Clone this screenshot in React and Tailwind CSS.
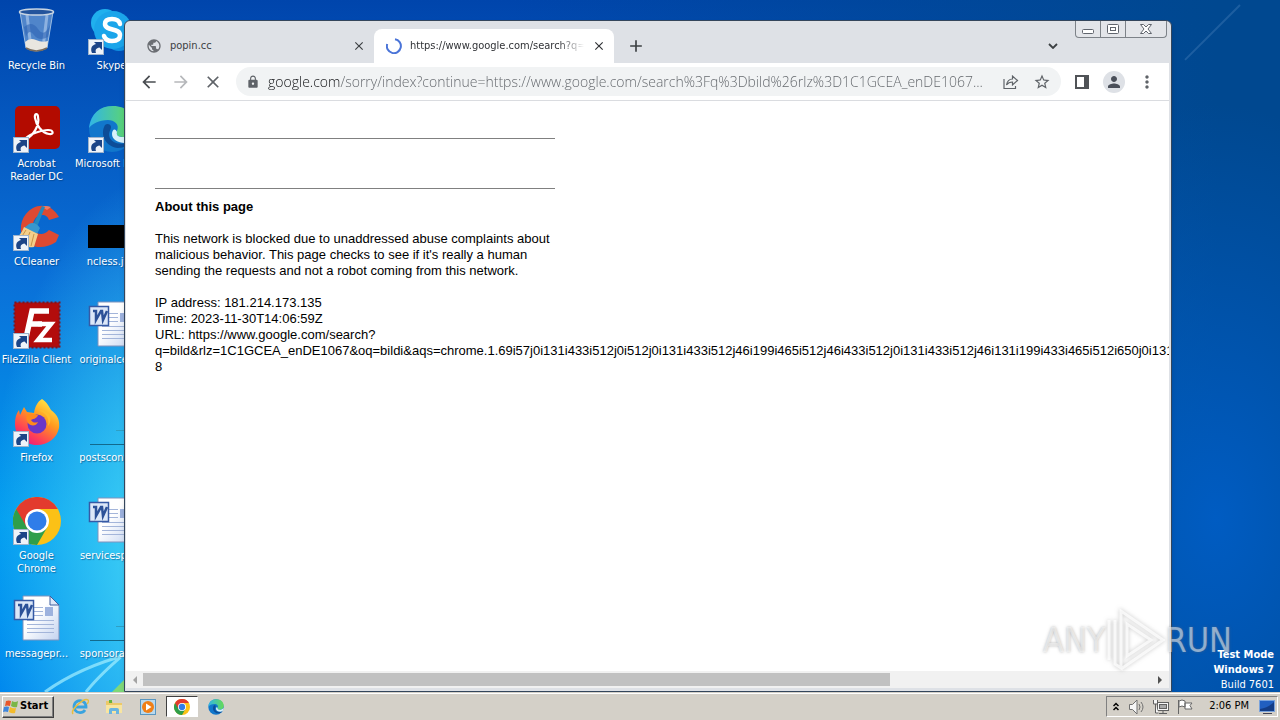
import { useState } from 'react';
import { MdArrowBack, MdArrowForward, MdClose, MdLock, MdStarOutline, MdPerson, MdMoreVert, MdAdd, MdPublic } from 'react-icons/md';

const PAGE_URL =
  'q=bild&rlz=1C1GCEA_enDE1067&oq=bildi&aqs=chrome.1.69i57j0i131i433i512j0i512j0i131i433i512j46i199i465i512j46i433i512j0i131i433i512j46i131i199i433i465i512i650j0i131i433i512&sourceid=chrome&ie=UTF-';

// Little arrow badge in the corner of a shortcut
function Shortcut() {
  return (
    <g>
      <rect x="0.5" y="32.5" width="15" height="15" fill="#eef3f9" stroke="#9fb4cc" />
      <path d="M4 46c-2-5 0-8 4-9L6 35h8v8l-2.500-2.500C8 41 7 43 8 46z" fill="#1c4587" />
    </g>
  );
}

function RecycleBin() {
  return (
    <svg viewBox="0 0 48 48" className="size-12">
      <path d="M7 5l6 36q10 6 21 0l6-36z" fill="#7ba6d8" fillOpacity="0.65" stroke="#9dbde2" />
      <path d="M14 8l4 33M34 8l-4 33" stroke="#c9def5" strokeOpacity="0.5" strokeWidth="3" />
      <path d="M11 20q8-7 14 2t12-4l-2 12q-9 5-14-2t-8 2z" fill="#2f64b4" fillOpacity="0.6" />
      <path d="M12 35q5-5 11-2t12 1l-1 7q-10 6-21 0z" fill="#e9e6e0" />
      <path d="M13 41q10 6 21 0" fill="none" stroke="#776b5e" strokeWidth="1.500" />
      <ellipse cx="23.500" cy="5" rx="17" ry="3" fill="#24549c" stroke="#c7d4e2" strokeWidth="1.500" />
    </svg>
  );
}

function SkypeIcon() {
  return (
    <svg viewBox="0 0 48 48" className="size-12">
      <circle cx="17" cy="16" r="14" fill="#20b0ee" />
      <circle cx="31" cy="30" r="14" fill="#0f8fe0" />
      <circle cx="25" cy="23" r="19" fill="#1ba5ea" />
      <path d="M32 17c-1-4-4-5-8-5-5 0-7 2-7 5 0 7 15 4 15 11 0 4-3 6-8 6-4 0-7-2-8-5" fill="none" stroke="#fff" strokeWidth="4.500" strokeLinecap="round" />
      <Shortcut />
    </svg>
  );
}

function AcrobatIcon() {
  return (
    <svg viewBox="0 0 48 48" className="size-12">
      <rect x="2" y="1" width="45" height="43" rx="5" fill="#b30b00" />
      <path d="M13 34c7-3 14-14 12-22 0-4-4-4-3 1 1 7 7 15 14 16 5 1 5-4-1-4-6 0-18 4-22 8-2 3-1 3 0 1z" fill="none" stroke="#fff" strokeWidth="2.200" strokeLinejoin="round" />
      <Shortcut />
    </svg>
  );
}

function EdgeIcon({ className = 'size-12', shortcut = true }) {
  return (
    <svg viewBox="0 0 48 48" className={className}>
      <defs>
        <linearGradient id="edgeTop" x1="0" y1="0" x2="1" y2="0">
          <stop offset="0" stopColor="#31b5e8" />
          <stop offset="1" stopColor="#66dc55" />
        </linearGradient>
      </defs>
      <circle cx="24" cy="24" r="23" fill="#1177cc" />
      <path d="M1 23C3 8 12 1 25 1c14 0 22 9 22 19 0 8-6 12-12 12-5 0-8-3-6-6 3-7-3-11-9-11C11 15 4 19 1 23z" fill="url(#edgeTop)" />
      <path d="M17 20c-6 11 2 22 13 23 6 0 11-3 14-7-9 5-22 3-23-6 0-4 2-5 2-8 0-3-4-4-6-2z" fill="#0c4d98" />
      <path d="M29 27c-1 3 1 5 6 5 5 0 9-2 11-6 1 4-1 9-3 11-9 3-19-1-19-8 0-4 3-7 5-2z" fill="#d8f1fa" />
      {shortcut && <Shortcut />}
    </svg>
  );
}

function CCleanerIcon() {
  return (
    <svg viewBox="0 0 48 48" className="size-12">
      <path d="M46 14C40 3 29 0 20 5 9 11 5 24 10 35c5 9 20 13 33 4l3-7-10-5c-5 6-13 5-15-1-3-7 2-14 8-14 4 0 6 2 7 5z" fill="#dd4a32" />
      <path d="M38 4q-6-2-9 0l5 3z" fill="#f17a5e" />
      <path d="M29 3l3 1-8 20-4-2z" fill="#2388bd" />
      <path d="M16 21q6-3 11 4l-3 6-13-6z" fill="#3798ce" />
      <path d="M11 24l14 7-4 13q-11 2-19-8 6-4 9-12z" fill="#f4cf8a" />
      <path d="M13 27L6 38M17 29l-5 12M21 31l-3 12" stroke="#c99345" />
      <Shortcut />
    </svg>
  );
}

function FileZillaIcon() {
  return (
    <svg viewBox="0 0 48 48" className="size-12">
      <rect x="1.500" y="1.500" width="45" height="45" fill="#b30c0c" stroke="#7c1420" strokeWidth="2" strokeDasharray="2 2" />
      <path d="M13 37l6-27h17M16 23h13" fill="none" stroke="#fff" strokeWidth="5.500" />
      <path d="M25 23h13L25 39h14" fill="none" stroke="#fff" strokeWidth="4.500" />
      <Shortcut />
    </svg>
  );
}

function FirefoxIcon() {
  return (
    <svg viewBox="0 0 48 48" className="size-12">
      <defs>
        <linearGradient id="fox" x1="0.8" y1="0" x2="0.2" y2="1">
          <stop offset="0" stopColor="#fff04a" />
          <stop offset="0.4" stopColor="#ff9a1f" />
          <stop offset="0.75" stopColor="#ff4056" />
          <stop offset="1" stopColor="#e31587" />
        </linearGradient>
      </defs>
      <path d="M29 0c6 4 7 8 9 11 7 5 9 11 8 18-2 10-11 17-22 17C11 46 2 37 2 25c0-6 1-10 4-14l1 5 4-8 3 5 7 1c1-6 3-11 8-14z" fill="url(#fox)" />
      <circle cx="24" cy="25" r="9.500" fill="#6b36c7" />
      <path d="M14 16c5-3 8 0 11 0-1 4-6 4-7 5 2 3 4 3 7 2-2 5-8 4-10 1-2-3-2-6-1-8z" fill="#ff8a1c" />
      <path d="M25 12c7 0 12 7 10 15 3-3 3-9 1-12-3-3-7-5-11-3z" fill="#ffbd2e" />
      <Shortcut />
    </svg>
  );
}

function ChromeIcon({ className = 'size-12', shortcut = true }) {
  return (
    <svg viewBox="0 0 48 48" className={className}>
      <circle cx="24" cy="24" r="24" fill="#fbc116" />
      <path d="M24 24L3.200 12A24 24 0 0 0 24 48l10.400-18z" fill="#2f9e4a" />
      <path d="M24 12h20.800A24 24 0 0 0 3.200 12l10.400 18z" fill="#e33b2e" />
      <circle cx="24" cy="24" r="12" fill="#fff" />
      <circle cx="24" cy="24" r="9.500" fill="#2f7de9" />
      {shortcut && <Shortcut />}
    </svg>
  );
}

function WordIcon() {
  return (
    <svg viewBox="0 0 48 48" className="size-12">
      <defs>
        <linearGradient id="sheet" x1="0" y1="0" x2="1" y2="1">
          <stop offset="0.4" stopColor="#fff" />
          <stop offset="1" stopColor="#c3d3f0" />
        </linearGradient>
      </defs>
      <path d="M10 1h27l9 9v35H10z" fill="url(#sheet)" stroke="#7f93bd" />
      <path d="M37 1v9h9z" fill="#dfe8f8" stroke="#3e5f9e" />
      <path d="M21 12.500h9M21 16.500h9M21 20.500h9M14 25.500h27M14 29.500h27M14 33.500h27M14 37.500h27" stroke="#a3b5da" />
      <path d="M32 12h8v9h-8z" fill="#9db2de" />
      <rect x="1.500" y="5.500" width="19" height="19" fill="#dce7f8" stroke="#365aa5" strokeWidth="1.500" />
      <path d="M5 10h3l0 9 5-9h1l1 9 4-9" fill="none" stroke="#2c5198" strokeWidth="2.500" />
    </svg>
  );
}

function BlackImage() {
  return (
    <svg viewBox="0 0 48 48" className="size-12">
      <rect x="0" y="22" width="48" height="23" fill="#000" />
    </svg>
  );
}

function BlankImage() {
  return (
    <svg viewBox="0 0 48 48" className="size-12">
      <path d="M2 45.500h46" stroke="#126a8d" />
      <path d="M28 31.500h20" stroke="#2e9fc4" />
    </svg>
  );
}

const desktopIcons = [
  { label: 'Recycle Bin', icon: <RecycleBin /> },
  { label: 'Acrobat Reader DC', icon: <AcrobatIcon /> },
  { label: 'CCleaner', icon: <CCleanerIcon /> },
  { label: 'FileZilla Client', icon: <FileZillaIcon /> },
  { label: 'Firefox', icon: <FirefoxIcon /> },
  { label: 'Google Chrome', icon: <ChromeIcon /> },
  { label: 'messagepr...', icon: <WordIcon /> },
  { label: 'Skype', icon: <SkypeIcon /> },
  { label: 'Microsoft Edge', icon: <EdgeIcon />, nowrap: true },
  { label: 'ncless.jpg', icon: <BlackImage /> },
  { label: 'originalcen...', icon: <WordIcon />, nowrap: true },
  { label: 'postscontri...', icon: <BlankImage />, nowrap: true },
  { label: 'servicespri...', icon: <WordIcon />, nowrap: true },
  { label: 'sponsoradi...', icon: <BlankImage />, nowrap: true },
];

function Wallpaper() {
  return (
    <svg className="absolute inset-0 size-full" viewBox="0 0 1280 693" preserveAspectRatio="none" aria-hidden="true">
      <path d="M45 693Q80 668 130 655M86 693Q100 675 130 650" fill="none" stroke="#a4f0ff" strokeOpacity="0.7" strokeWidth="3" />
      <path d="M112 693l14-14v14z" fill="#7fd879" />
      <path d="M1240 5L1185 60" stroke="#5f93c8" strokeOpacity="0.3" strokeWidth="2" />
    </svg>
  );
}

function Tabs() {
  return (
    <div className="flex h-[34px] items-stretch pl-2">
      <div className="flex w-60 min-w-0 items-center gap-2 pr-2 pl-3 text-[#3c4043]">
        <MdPublic className="size-4 shrink-0 text-[#6b6e73]" />
        <span className="flex-1 truncate">popin.cc</span>
        <button aria-label="Close tab popin.cc"><MdClose className="size-3.5" /></button>
      </div>
      <div className="flex w-60 min-w-0 items-center gap-2 rounded-t-lg bg-white pr-2 pl-3 text-[#303236]">
        <svg viewBox="0 0 16 16" className="size-4 shrink-0">
          <path d="M9 1.200A7 7 0 1 1 1.200 6" fill="none" stroke="#4a74d8" strokeWidth="2" />
        </svg>
        <span className="flex-1 overflow-hidden whitespace-nowrap mask-r-from-85%">https://www.google.com/search?q=</span>
        <button aria-label="Close tab google.com"><MdClose className="size-3.5" /></button>
      </div>
      <button aria-label="New tab" className="ml-3 text-[#3c4043]"><MdAdd className="size-5" /></button>
      <button aria-label="Search tabs" className="mr-28 ml-auto text-[#3c4043]">
        <svg viewBox="0 0 10 6" className="h-1.5 w-2.5"><path d="M1 1l4 4 4-4" fill="none" stroke="currentColor" strokeWidth="1.800" /></svg>
      </button>
    </div>
  );
}

function Toolbar() {
  const [address, setAddress] = useState(
    'google.com/sorry/index?continue=https://www.google.com/search%3Fq%3Dbild%26rlz%3D1C1GCEA_enDE1067...'
  );

  return (
    <div className="flex h-[38px] items-center border-b border-[#dadce0] bg-white pr-3 pl-[13px] text-[#5f6368]">
      <div className="flex gap-3">
        <button aria-label="Back" className="text-[#4a4d51]"><MdArrowBack className="size-5" /></button>
        <button aria-label="Forward" className="text-[#b6b8bb]"><MdArrowForward className="size-5" /></button>
        <button aria-label="Stop loading"><MdClose className="size-5" /></button>
      </div>
      <div className="ml-[13px] flex h-[29px] min-w-0 flex-1 items-center gap-2 rounded-full bg-[#f1f3f4] px-2.5">
        <MdLock className="size-3.5 shrink-0" />
        <input
          aria-label="Address"
          value={address}
          onChange={(e) => setAddress(e.target.value)}
          className="min-w-0 flex-1 bg-[linear-gradient(to_right,#101114_73px,#5f6368_73px)] bg-clip-text font-['Open_Sans',sans-serif] text-sm font-light text-transparent outline-none"
        />
        <button aria-label="Share">
          <svg viewBox="0 0 16 16" className="size-4" fill="none" stroke="currentColor" strokeWidth="1.200">
            <path d="M1 5v9.500h11.500V12M3.500 11q1-6 6-6V2l5 4.500-5 4.500V8q-4 0-6 3z" />
          </svg>
        </button>
        <button aria-label="Bookmark this page" className="ml-1.5"><MdStarOutline className="size-[18px]" /></button>
      </div>
      <div className="ml-3 flex items-center gap-3">
        <button aria-label="Side panel">
          <svg viewBox="0 0 18 18" className="size-[18px]">
            <path d="M2 2h14v14H2zM4 4v10h7V4z" fill="#505357" fillRule="evenodd" />
          </svg>
        </button>
        <button aria-label="Profile" className="flex size-[22px] items-center justify-center rounded-full bg-[#dee1e6] text-[#4a4f59]">
          <MdPerson className="size-[18px]" />
        </button>
        <button aria-label="Menu"><MdMoreVert className="size-5" /></button>
      </div>
    </div>
  );
}

function CaptionButtons() {
  return (
    <div className="absolute top-0 right-1 flex h-[17px] rounded-b-sm border border-t-0 border-[#7d8288] bg-[#e3e5e9] text-[#60656d]">
      <button aria-label="Minimize" className="flex w-[25px] items-center justify-center border-r border-[#7d8288]">
        <svg viewBox="0 0 12 10" className="h-2.5 w-3"><rect x="0.500" y="5.500" width="11" height="4" rx="1" fill="#fff" stroke="currentColor" /></svg>
      </button>
      <button aria-label="Maximize" className="flex w-[25px] items-center justify-center border-r border-[#7d8288]">
        <svg viewBox="0 0 12 10" className="h-2.5 w-3" fill="#fff" stroke="currentColor"><rect x="0.500" y="0.500" width="11" height="9" rx="1" /><rect x="3.500" y="3.500" width="5" height="3" /></svg>
      </button>
      <button aria-label="Close" className="flex w-[40px] items-center justify-center">
        <svg viewBox="0 0 12 10" className="h-2.5 w-3"><path d="M0.500 0.500h3L6 3l2.500-2.500h3L8 5l3.500 4.500h-3L6 7 3.500 9.500h-3L4 5z" fill="#fff" stroke="currentColor" /></svg>
      </button>
    </div>
  );
}

function SorryPage() {
  return (
    <main className="flex-1 overflow-hidden bg-white px-[29px] pt-[37px] font-['Liberation_Sans',Arial,sans-serif] text-[13px] leading-4 text-black">
      <div className="max-w-[400px] whitespace-nowrap">
        <hr className="border-[#808080]" />
        <hr className="mt-[49px] border-[#808080]" />
        <h1 className="mt-2.5 font-bold">About this page</h1>
        <p className="mt-4">
          This network is blocked due to unaddressed abuse complaints about
          <br />
          malicious behavior. This page checks to see if it's really a human
          <br />
          sending the requests and not a robot coming from this network.
        </p>
        <p className="mt-4">
          IP address: 181.214.173.135
          <br />
          Time: 2023-11-30T14:06:59Z
          <br />
          URL: https://www.google.com/search?
          <br />
          {PAGE_URL}
          <br />
          8
        </p>
      </div>
    </main>
  );
}

function BrowserWindow() {
  return (
    <section className="absolute top-5 right-[108px] bottom-0 left-[124px] flex flex-col overflow-hidden rounded-t-md border border-[#34465c] bg-[#dee1e6] px-px pb-[3px] text-[11px] shadow-md">
      <div className="h-2 shrink-0" />
      <CaptionButtons />
      <Tabs />
      <div className="mr-px flex min-h-0 flex-1 flex-col">
        <Toolbar />
        <SorryPage />
        <div className="flex h-[17px] shrink-0 items-center justify-between bg-[#f1f1f1] px-1.5">
          <svg viewBox="0 0 6 8" className="h-2 w-1.5"><path d="M5 0v8L1 4z" fill="#a3a3a3" /></svg>
          <div className="mx-[5px] h-[13px] flex-1">
            <div className="h-full w-[74%] bg-[#c1c1c1]" />
          </div>
          <svg viewBox="0 0 6 8" className="h-2 w-1.5"><path d="M1 0v8l4-4z" fill="#505050" /></svg>
        </div>
      </div>
    </section>
  );
}

function Watermark() {
  return (
    <div className="pointer-events-none absolute right-12 bottom-5 flex items-center font-['DejaVu_Sans_Condensed',sans-serif] text-[34px] leading-none text-white/50 [text-shadow:0_0_3px_rgb(110_110_110/50%)]">
      <span>ANY</span>
      <svg viewBox="0 0 60 64" className="h-16 w-[60px] drop-shadow-[0_0_2px_rgb(110_110_110/50%)]" fill="none" stroke="#fff" strokeOpacity="0.75" strokeWidth="3">
        <path d="M4 12v40M10 12v44l6 4V3l42 29-42 29M22 16v32l24-16z" />
      </svg>
      <span>RUN</span>
    </div>
  );
}

function Taskbar() {
  return (
    <footer className="flex h-7 shrink-0 items-center border-t border-[#d4d0c8] bg-[#d4d0c8] pr-0.5 pl-0.5 text-[11px] text-black inset-shadow-[0_1px_#fff]">
      <button className="flex h-[22px] w-[52px] items-center gap-px border border-t-white border-r-[#404040] border-b-[#404040] border-l-white font-bold shadow-[inset_-1px_-1px_#808080]">
        <svg viewBox="0 0 16 16" className="size-4 shrink-0">
          <path d="M3 2q3-1 5 0L7 7Q4 6 2 7z" fill="#e8572a" />
          <path d="M9 2q3 2 6 0l-1 6q-3 1-6-1z" fill="#7ab648" />
          <path d="M1 8q3-1 5 0l-1 5q-3-1-5 0z" fill="#3f86dc" />
          <path d="M7 8q3 2 6 1l-1 5q-3 1-6-1z" fill="#f3bb2c" />
        </svg>
        Start
      </button>
      <nav className="ml-2.5 flex items-center gap-0.5" aria-label="Quick launch">
        <button aria-label="Internet Explorer" className="flex h-[22px] w-8 items-center justify-center">
          <svg viewBox="0 0 18 18" className="size-[18px]" fill="none">
            <path d="M14 12a6 6 0 1 1 1-3H5" stroke="#39a3df" strokeWidth="2.800" />
            <path d="M2 16C-1 12 13-1 17 2c1 1 0 3-1 4" stroke="#e7bd3f" strokeWidth="1.500" />
          </svg>
        </button>
        <button aria-label="Explorer" className="flex h-[22px] w-8 items-center justify-center">
          <svg viewBox="0 0 18 18" className="size-[18px]">
            <path d="M1 3h6l1 2h9v9H1z" fill="#ecc968" />
            <path d="M4 2h3v3H4z" fill="#64b33c" />
            <path d="M1 7h16v8H1z" fill="#f8e5a0" />
            <path d="M4 16v-4q0-2 2-2h6q2 0 2 2v4h-3v-3H7v3z" fill="#6bb4df" />
          </svg>
        </button>
        <button aria-label="Media Player" className="flex h-[22px] w-8 items-center justify-center">
          <svg viewBox="0 0 16 16" className="size-4">
            <rect x="0.500" y="0.500" width="15" height="15" fill="#b9d9ee" stroke="#5996c0" />
            <circle cx="8" cy="8" r="6" fill="#f07f17" />
            <path d="M6 4.500v7L11.500 8z" fill="#fff" />
          </svg>
        </button>
        <button aria-label="Google Chrome" className="flex h-[21px] w-8 items-center justify-center border border-t-[#404040] border-r-white border-b-white border-l-[#404040] bg-white">
          <ChromeIcon className="size-4" shortcut={false} />
        </button>
        <button aria-label="Microsoft Edge" className="flex h-[22px] w-8 items-center justify-center">
          <EdgeIcon className="size-4" shortcut={false} />
        </button>
      </nav>
      <div className="ml-auto flex h-[21px] items-center gap-2 border border-t-[#808080] border-r-white border-b-white border-l-[#808080] pr-0.5 pl-1.5">
        <svg viewBox="0 0 6 9" className="mr-0.5 h-[9px] w-1.5" fill="none" stroke="#000" strokeWidth="1.500"><path d="M0.500 4L3 1.500 5.500 4M0.500 8L3 5.500 5.500 8" /></svg>
        <svg viewBox="0 0 16 16" className="size-4" fill="#f6f6f6" stroke="#707070">
          <path d="M0.500 5.500h3L8 1v14l-4.500-4.500h-3z" />
          <path d="M10 5q2 3 0 6M12 3q4 5 0 10" fill="none" />
        </svg>
        <svg viewBox="0 0 16 16" className="size-4" fill="#f6f6f6" stroke="#606060">
          <rect x="4.500" y="3.500" width="11" height="8" /><rect x="6.500" y="5.500" width="7" height="4" fill="#a9a9a9" />
          <path d="M6 14.500h8M10 12v2M0.500 1v4h4V1M2.500 5v9h3" />
        </svg>
        <svg viewBox="0 0 16 16" className="size-4" fill="#fff" stroke="#666"><path d="M1.500 1v14M2 2q3-2 6 0v6Q5 6 2 8zM8 4h7l-2 2.500L15 10H8z" /></svg>
        <time className="ml-2">2:06 PM</time>
        <svg viewBox="0 0 16 14" className="ml-0.5 h-3.5 w-4"><rect x="0.500" y="0.500" width="15" height="11" fill="#215fc0" stroke="#7aa3dc" /><path d="M1 9q8-1 14-7v9H1z" fill="#143d86" /><path d="M4 13.500h9" stroke="#445" /></svg>
      </div>
    </footer>
  );
}

export default function App() {
  return (
    <div className="flex h-screen flex-col overflow-hidden font-['DejaVu_Sans_Condensed',Tahoma,sans-serif]">
      <div className="relative min-h-0 flex-1 overflow-hidden bg-[radial-gradient(ellipse_14%_55%_at_13%_80%,#48d8f6,transparent),radial-gradient(ellipse_20%_60%_at_95%_75%,#005cc2,transparent),linear-gradient(to_right,transparent_40%,#004890_95%),linear-gradient(to_bottom,#0045ac,#0a70d8_40%,#009cf0_75%,#0088ee)]">
        <Wallpaper />
        <ul className="relative grid h-full grid-flow-col auto-cols-[73px] grid-rows-[repeat(7,98px)] gap-x-0.5 text-center text-[11px] leading-[13px] text-white [text-shadow:1px_1px_1px_#00306080]">
          {desktopIcons.map((item) => (
            <li key={item.label} className="flex flex-col items-center gap-1 pt-[7px]">
              {item.icon}
              <span className={item.nowrap ? 'whitespace-nowrap' : 'w-[72px]'}>{item.label}</span>
            </li>
          ))}
        </ul>
        <BrowserWindow />
        <Watermark />
        <div className="absolute right-1.5 bottom-0 text-right text-[11px] leading-[15px] text-white">
          <p className="font-bold">Test Mode</p>
          <p className="font-bold">Windows 7</p>
          <p>Build 7601</p>
        </div>
      </div>
      <Taskbar />
    </div>
  );
}
